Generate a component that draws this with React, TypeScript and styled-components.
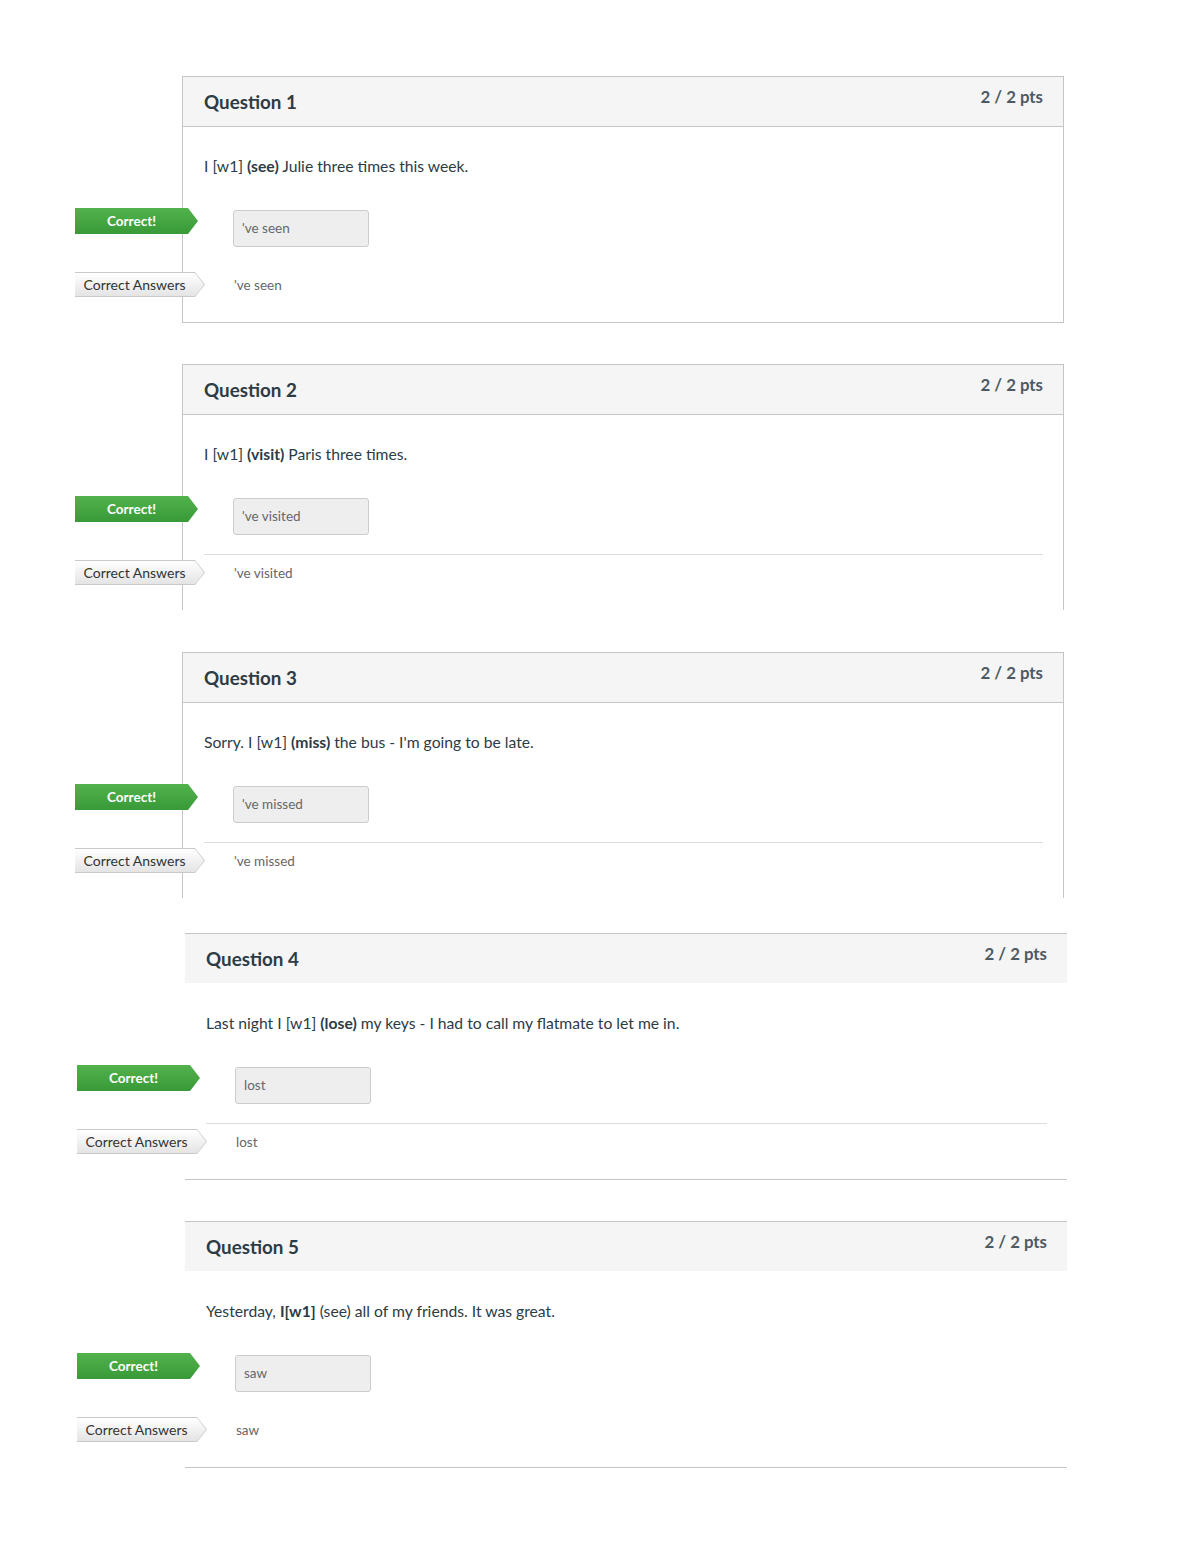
import React from 'react'
import styled, { createGlobalStyle, css } from 'styled-components'

const GlobalStyle = createGlobalStyle`
  body {
    margin: 0;
    background: #ffffff;
    font-family: Lato, 'Open Sans', 'Liberation Sans', sans-serif;
    color: #2d3b45;
  }
`

type Frame = 'box' | 'open' | 'lines'

const Page = styled.div`
  width: 1200px;
  min-height: 1553px;
  padding-top: 76px;
  box-sizing: border-box;
`

const QuizColumn = styled.div`
  display: flex;
  flex-direction: column;
  gap: 41px;
  padding-left: 182px;
`

const QuestionCard = styled.div<{ $frame: Frame; $shift?: number; $gapFix?: number }>`
  width: 882px;
  box-sizing: border-box;
  margin-left: ${(p) => p.$shift || 0}px;
  margin-top: ${(p) => p.$gapFix || 0}px;
  ${(p) =>
    p.$frame === 'box' &&
    css`
      border: 1px solid #c5c5c5;
    `}
  ${(p) =>
    p.$frame === 'open' &&
    css`
      border: 1px solid #c5c5c5;
      border-bottom: none;
    `}
  ${(p) =>
    p.$frame === 'lines' &&
    css`
      border-top: 1px solid #c5c5c5;
      border-bottom: 1px solid #c5c5c5;
    `}
`

const CardHeader = styled.div<{ $ruled: boolean }>`
  height: 49px;
  background: #f5f5f5;
  border-bottom: 1px solid ${(p) => (p.$ruled ? '#c5c5c5' : '#ffffff')};
  display: flex;
  justify-content: space-between;
  align-items: flex-start;
  padding: 0 20px 0 21px;
`

const QuestionTitle = styled.h2`
  margin: 0;
  font-size: 18.8px;
  font-weight: 700;
  line-height: 50px;
  color: #2d3b45;
`

const Points = styled.div`
  padding-top: 10px;
  font-size: 16.8px;
  font-weight: 700;
  line-height: 20px;
  color: #4e5a63;
`

const CardBody = styled.div`
  padding: 28px 20px 0 21px;
`

const QuestionText = styled.p`
  margin: 0 0 31px;
  font-size: 15.7px;
  line-height: 22px;
  color: #2d3b45;

  b {
    font-weight: 700;
  }
`

const AnswerRow = styled.div<{ $kind: 'user' | 'key'; $divided?: boolean }>`
  position: relative;
  padding-left: 29px;
  ${(p) =>
    p.$kind === 'user'
      ? css`
          padding-top: 2px;
          padding-bottom: 19px;
        `
      : css`
          border-top: 1px solid ${p.$divided ? '#dcdcdc' : 'transparent'};
          padding-top: 5px;
          padding-bottom: 25px;
        `}
`

const Badge = styled.div<{ $tone: 'correct' | 'answers' }>`
  position: absolute;
  left: -129px;
  box-sizing: border-box;
  display: flex;
  align-items: center;
  justify-content: center;
  padding-right: 10px;
  clip-path: polygon(0 0, calc(100% - 10px) 0, 100% 50%, calc(100% - 10px) 100%, 0 100%);
  ${(p) =>
    p.$tone === 'correct'
      ? css`
          top: 0;
          width: 123px;
          height: 26px;
          background: linear-gradient(#52b24d, #389a37);
          color: #ffffff;
          font-size: 13.5px;
          font-weight: 700;
        `
      : css`
          top: 5px;
          width: 130px;
          height: 25px;
          background: #c9c9c9;
          color: #333333;
          font-size: 14px;
        `}
`

const BadgeFace = styled.span`
  position: absolute;
  inset: 1px 1px 1px 0;
  display: flex;
  align-items: center;
  justify-content: center;
  padding-right: 10px;
  background: linear-gradient(#ffffff, #e4e4e4);
  clip-path: polygon(0 0, calc(100% - 9px) 0, 100% 50%, calc(100% - 9px) 100%, 0 100%);
`

const AnswerInput = styled.div`
  width: 136px;
  height: 37px;
  box-sizing: border-box;
  background: #eeeeee;
  border: 1px solid #cccccc;
  border-radius: 3px;
  padding: 0 8px;
  font-size: 13.5px;
  line-height: 35px;
  color: #666666;
`

const AnswerText = styled.div`
  height: 25px;
  line-height: 27px;
  padding-left: 1px;
  font-size: 13.5px;
  color: #666666;
`

interface Question {
  n: number
  text: React.ReactNode
  answer: string
  frame: Frame
  divided: boolean
  shift?: number
  gapFix?: number
}

const questions: Question[] = [
  {
    n: 1,
    text: (
      <>
        I [w1] <b>(see)</b> Julie three times this week.
      </>
    ),
    answer: "'ve seen",
    frame: 'box',
    divided: false,
  },
  {
    n: 2,
    text: (
      <>
        I [w1] <b>(visit)</b> Paris three times.
      </>
    ),
    answer: "'ve visited",
    frame: 'open',
    divided: true,
  },
  {
    n: 3,
    text: (
      <>
        Sorry. I [w1] <b>(miss)</b> the bus - I'm going to be late.
      </>
    ),
    answer: "'ve missed",
    frame: 'open',
    divided: true,
    gapFix: 1,
  },
  {
    n: 4,
    text: (
      <>
        Last night I [w1] <b>(lose)</b> my keys - I had to call my flatmate to let me in.
      </>
    ),
    answer: 'lost',
    frame: 'lines',
    divided: true,
    shift: 3,
    gapFix: -6,
  },
  {
    n: 5,
    text: (
      <>
        Yesterday, <b>I[w1]</b> (see) all of my friends. It was great.
      </>
    ),
    answer: 'saw',
    frame: 'lines',
    divided: false,
    shift: 3,
  },
]

export default function App() {
  return (
    <Page>
      <GlobalStyle />
      <QuizColumn>
        {questions.map((q) => (
          <QuestionCard key={q.n} $frame={q.frame} $shift={q.shift} $gapFix={q.gapFix}>
            <CardHeader $ruled={q.frame !== 'lines'}>
              <QuestionTitle>Question {q.n}</QuestionTitle>
              <Points>2 / 2 pts</Points>
            </CardHeader>
            <CardBody>
              <QuestionText>{q.text}</QuestionText>
              <AnswerRow $kind='user'>
                <Badge $tone='correct'>Correct!</Badge>
                <AnswerInput>{q.answer}</AnswerInput>
              </AnswerRow>
              <AnswerRow $kind='key' $divided={q.divided}>
                <Badge $tone='answers'>
                  <BadgeFace>Correct Answers</BadgeFace>
                </Badge>
                <AnswerText>{q.answer}</AnswerText>
              </AnswerRow>
            </CardBody>
          </QuestionCard>
        ))}
      </QuizColumn>
    </Page>
  )
}
